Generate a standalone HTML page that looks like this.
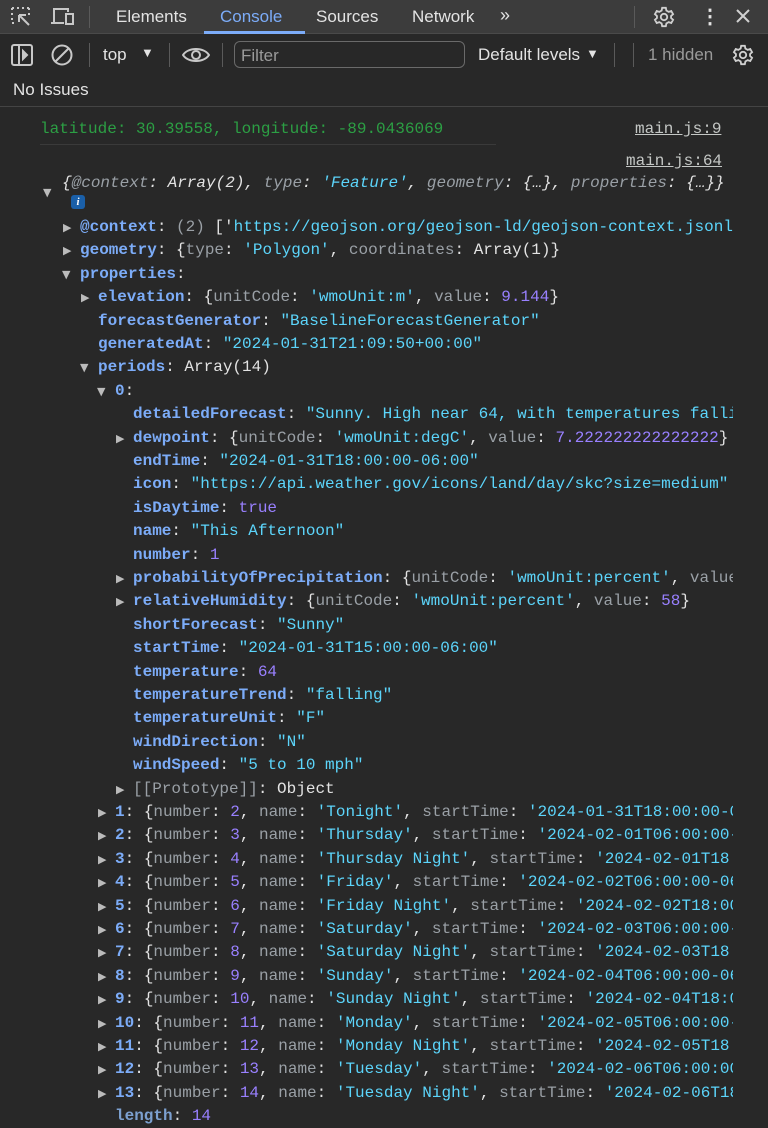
<!DOCTYPE html>
<html><head><meta charset="utf-8"><style>
*{margin:0;padding:0;box-sizing:border-box}
body{width:768px;height:1128px;background:#282828;overflow:hidden;position:relative;font-family:"Liberation Sans",sans-serif;color:#e3e3e3}
.tb{position:absolute;left:0;top:0;width:768px;height:34px;background:#3c3c3c;border-bottom:1px solid #4a4a4a}
.t{position:absolute;top:7px;font-size:17px;color:#e3e3e3}
.sel{color:#7cacf8}
.ul{position:absolute;left:204px;top:31px;width:101px;height:3px;background:#7cacf8}
.vs{position:absolute;width:1px;background:#5a5a5a}
.tool{position:absolute;top:35px;left:0;width:768px;height:40px}
.issues{position:absolute;left:13px;top:80px;font-size:17px}
.hr{position:absolute;left:0;width:768px;height:1px;background:#444}
.m{font-family:"Liberation Mono",monospace;font-size:16px;position:absolute;white-space:pre;line-height:23px}
.r{position:absolute;left:0;width:733px;overflow:hidden;height:23px}
.k{color:#7cacf8;font-weight:bold}
.kd{color:#7ca0d0;font-weight:bold}
.s{color:#5cd5fb}
.n{color:#9980ff}
.d{color:#9aa0a6}
.w{color:#e3e3e3}
.a{position:absolute;color:#bbb;font-size:11px;line-height:23px;font-family:"DejaVu Sans",sans-serif}
.r .a{top:0 !important}
.lnk{color:#c4c7c5;text-decoration:underline}
</style></head><body>
<div class="tb">
<svg style="position:absolute;left:10px;top:6px" width="24" height="22" viewBox="0 0 24 22" fill="none" stroke="#c8c8c8" stroke-width="2"><path d="M2 2h2M7 2h2M12 2h2M17 2h2M2 2v2M2 7v2M2 12v2M2 17h2M19 2v2M19 7v2" /><path d="M9 9l10 10M9 9v7M9 9h7"/></svg>
<svg style="position:absolute;left:50px;top:6px" width="26" height="22" viewBox="0 0 26 22" fill="none" stroke="#c8c8c8" stroke-width="2"><path d="M4 16V3h14v3M1 17h13"/><rect x="16" y="8" width="7" height="10"/></svg>
<div class="vs" style="left:89px;top:6px;height:22px"></div>
<div class="t" style="left:116px">Elements</div>
<div class="t sel" style="left:220px">Console</div>
<div class="t" style="left:316px">Sources</div>
<div class="t" style="left:412px">Network</div>
<div class="t" style="left:500px;font-size:18px;top:5px">»</div>
<div class="ul"></div>
<div class="vs" style="left:634px;top:6px;height:22px"></div>
<svg style="position:absolute;left:653px;top:6px" width="22" height="22" viewBox="0 0 24 24" fill="none" stroke="#d0d0d0" stroke-width="2"><circle cx="12" cy="12" r="3.5"/><path d="M10 2h4l.6 3 2.5 1.4 2.8-1 2 3.5-2.2 2v2.2l2.2 2-2 3.5-2.8-1L14.6 19 14 22h-4l-.6-3-2.5-1.4-2.8 1-2-3.5 2.2-2v-2.2l-2.2-2 2-3.5 2.8 1L9.4 5z"/></svg>
<div class="t" style="left:700px;top:4px;font-size:20px;font-weight:bold">⋮</div>
<svg style="position:absolute;left:735px;top:8px" width="16" height="16" viewBox="0 0 16 16" stroke="#d0d0d0" stroke-width="2"><path d="M2 2l12 12M14 2L2 14"/></svg>
</div>
<div class="tool">
<svg style="position:absolute;left:11px;top:9px" width="22" height="22" viewBox="0 0 22 22" fill="none" stroke="#c8c8c8" stroke-width="2"><rect x="1" y="1" width="20" height="20" rx="2"/><path d="M8 1v20"/><path d="M12 7l4 4-4 4z" fill="#c8c8c8"/></svg>
<svg style="position:absolute;left:51px;top:9px" width="22" height="22" viewBox="0 0 22 22" fill="none" stroke="#c8c8c8" stroke-width="2"><circle cx="11" cy="11" r="9.5"/><path d="M4 18L18 4"/></svg>
<div class="vs" style="left:89px;top:8px;height:24px"></div>
<div class="t" style="left:103px;top:10px">top</div>
<div class="t" style="left:141px;top:10px;font-size:13px">▼</div>
<div class="vs" style="left:169px;top:8px;height:24px"></div>
<svg style="position:absolute;left:182px;top:11px" width="28" height="18" viewBox="0 0 28 18" fill="none" stroke="#c8c8c8" stroke-width="2"><path d="M1 9C6 1 22 1 27 9 22 17 6 17 1 9z"/><circle cx="14" cy="9" r="4"/></svg>
<div class="vs" style="left:222px;top:8px;height:24px"></div>
<div style="position:absolute;left:234px;top:6px;width:231px;height:27px;border:1px solid #6a6a6a;border-radius:6px"></div>
<div class="t" style="left:241px;top:11px;color:#9a9a9a">Filter</div>
<div class="t" style="left:478px;top:10px">Default levels</div>
<div class="t" style="left:586px;top:11px;font-size:13px">▼</div>
<div class="vs" style="left:614px;top:8px;height:24px"></div>
<div class="vs" style="left:633px;top:8px;height:24px"></div>
<div class="t" style="left:648px;top:10px;color:#9a9a9a">1 hidden</div>
<svg style="position:absolute;left:732px;top:9px" width="22" height="22" viewBox="0 0 24 24" fill="none" stroke="#d0d0d0" stroke-width="2"><circle cx="12" cy="12" r="3.5"/><path d="M10 2h4l.6 3 2.5 1.4 2.8-1 2 3.5-2.2 2v2.2l2.2 2-2 3.5-2.8-1L14.6 19 14 22h-4l-.6-3-2.5-1.4-2.8 1-2-3.5 2.2-2v-2.2l-2.2-2 2-3.5 2.8 1L9.4 5z"/></svg>
</div>
<div class="issues">No Issues</div>
<div class="hr" style="top:106px"></div>
<div class="m" style="left:40px;top:118px;color:#2c9f44">latitude: 30.39558, longitude: -89.0436069</div>
<div class="m lnk" style="left:635px;top:118px">main.js:9</div>
<div class="hr" style="top:144px;left:40px;width:456px;background:#3a3a3a"></div>
<div class="m lnk" style="left:626px;top:150px">main.js:64</div>
<div class="a" style="left:43px;top:181px">▼</div>
<div class="m" style="left:62px;top:172px;font-style:italic"><span class="w">{</span><span class="d">@context</span><span class="w">: Array(2), </span><span class="d">type</span><span class="w">: </span><span class="s">'Feature'</span><span class="w">, </span><span class="d">geometry</span><span class="w">: {…}, </span><span class="d">properties</span><span class="w">: {…}}</span></div>
<div style="position:absolute;left:71px;top:195px;width:14px;height:14px;border-radius:3px;background:#1a5fa8;color:#fff;font:bold italic 11px 'Liberation Serif',serif;text-align:center;line-height:14px">i</div>
<div class="m" style="left:0;top:216px;width:733px;height:912px;overflow:hidden">
<div class="r" style="top:0"><span class="a" style="left:63px">▶</span><span style="position:absolute;left:80px"><span class="k">@context</span>: <span class="d">(2)</span> ['<span class="s">https://geojson.org/geojson-ld/geojson-context.jsonld</span></span></div>
<div class="r" style="top:23.4px"><span class="a" style="left:63px">▶</span><span style="position:absolute;left:80px"><span class="k">geometry</span>: {<span class="d">type</span>: <span class="s">'Polygon'</span>, <span class="d">coordinates</span>: Array(1)}</span></div>
<div class="r" style="top:46.8px"><span class="a" style="left:62px">▼</span><span style="position:absolute;left:80px"><span class="k">properties</span>:</span></div>
<div class="r" style="top:70.2px"><span class="a" style="left:81px">▶</span><span style="position:absolute;left:98px"><span class="k">elevation</span>: {<span class="d">unitCode</span>: <span class="s">'wmoUnit:m'</span>, <span class="d">value</span>: <span class="n">9.144</span>}</span></div>
<div class="r" style="top:93.6px"><span style="position:absolute;left:98px"><span class="k">forecastGenerator</span>: <span class="s">"BaselineForecastGenerator"</span></span></div>
<div class="r" style="top:117px"><span style="position:absolute;left:98px"><span class="k">generatedAt</span>: <span class="s">"2024-01-31T21:09:50+00:00"</span></span></div>
<div class="r" style="top:140.4px"><span class="a" style="left:80px">▼</span><span style="position:absolute;left:98px"><span class="k">periods</span>: Array(14)</span></div>
<div class="r" style="top:163.8px"><span class="a" style="left:97px">▼</span><span style="position:absolute;left:115px"><span class="k">0</span>:</span></div>
<div class="r" style="top:187.2px"><span style="position:absolute;left:133px"><span class="k">detailedForecast</span>: <span class="s">"Sunny. High near 64, with temperatures falling</span></span></div>
<div class="r" style="top:210.6px"><span class="a" style="left:116px">▶</span><span style="position:absolute;left:133px"><span class="k">dewpoint</span>: {<span class="d">unitCode</span>: <span class="s">'wmoUnit:degC'</span>, <span class="d">value</span>: <span class="n">7.222222222222222</span>}</span></div>
<div class="r" style="top:234px"><span style="position:absolute;left:133px"><span class="k">endTime</span>: <span class="s">"2024-01-31T18:00:00-06:00"</span></span></div>
<div class="r" style="top:257.4px"><span style="position:absolute;left:133px"><span class="k">icon</span>: <span class="s">"https://api.weather.gov/icons/land/day/skc?size=medium"</span></span></div>
<div class="r" style="top:280.8px"><span style="position:absolute;left:133px"><span class="k">isDaytime</span>: <span class="n">true</span></span></div>
<div class="r" style="top:304.2px"><span style="position:absolute;left:133px"><span class="k">name</span>: <span class="s">"This Afternoon"</span></span></div>
<div class="r" style="top:327.6px"><span style="position:absolute;left:133px"><span class="k">number</span>: <span class="n">1</span></span></div>
<div class="r" style="top:351px"><span class="a" style="left:116px">▶</span><span style="position:absolute;left:133px"><span class="k">probabilityOfPrecipitation</span>: {<span class="d">unitCode</span>: <span class="s">'wmoUnit:percent'</span>, <span class="d">value</span>: <span class="n">0</span>}</span></div>
<div class="r" style="top:374.4px"><span class="a" style="left:116px">▶</span><span style="position:absolute;left:133px"><span class="k">relativeHumidity</span>: {<span class="d">unitCode</span>: <span class="s">'wmoUnit:percent'</span>, <span class="d">value</span>: <span class="n">58</span>}</span></div>
<div class="r" style="top:397.8px"><span style="position:absolute;left:133px"><span class="k">shortForecast</span>: <span class="s">"Sunny"</span></span></div>
<div class="r" style="top:421.2px"><span style="position:absolute;left:133px"><span class="k">startTime</span>: <span class="s">"2024-01-31T15:00:00-06:00"</span></span></div>
<div class="r" style="top:444.6px"><span style="position:absolute;left:133px"><span class="k">temperature</span>: <span class="n">64</span></span></div>
<div class="r" style="top:468px"><span style="position:absolute;left:133px"><span class="k">temperatureTrend</span>: <span class="s">"falling"</span></span></div>
<div class="r" style="top:491.4px"><span style="position:absolute;left:133px"><span class="k">temperatureUnit</span>: <span class="s">"F"</span></span></div>
<div class="r" style="top:514.8px"><span style="position:absolute;left:133px"><span class="k">windDirection</span>: <span class="s">"N"</span></span></div>
<div class="r" style="top:538.2px"><span style="position:absolute;left:133px"><span class="k">windSpeed</span>: <span class="s">"5 to 10 mph"</span></span></div>
<div class="r" style="top:561.6px"><span class="a" style="left:116px">▶</span><span style="position:absolute;left:133px"><span style="color:#9aa0a6">[[Prototype]]</span>: Object</span></div>
<div class="r" style="top:585px"><span class="a" style="left:98px">▶</span><span style="position:absolute;left:115px"><span class="k">1</span>: {<span class="d">number</span>: <span class="n">2</span>, <span class="d">name</span>: <span class="s">'Tonight'</span>, <span class="d">startTime</span>: <span class="s">'2024-01-31T18:00:00-06:00'</span></span></div>
<div class="r" style="top:608.4px"><span class="a" style="left:98px">▶</span><span style="position:absolute;left:115px"><span class="k">2</span>: {<span class="d">number</span>: <span class="n">3</span>, <span class="d">name</span>: <span class="s">'Thursday'</span>, <span class="d">startTime</span>: <span class="s">'2024-02-01T06:00:00-06:00'</span></span></div>
<div class="r" style="top:631.8px"><span class="a" style="left:98px">▶</span><span style="position:absolute;left:115px"><span class="k">3</span>: {<span class="d">number</span>: <span class="n">4</span>, <span class="d">name</span>: <span class="s">'Thursday Night'</span>, <span class="d">startTime</span>: <span class="s">'2024-02-01T18:00:00'</span></span></div>
<div class="r" style="top:655.2px"><span class="a" style="left:98px">▶</span><span style="position:absolute;left:115px"><span class="k">4</span>: {<span class="d">number</span>: <span class="n">5</span>, <span class="d">name</span>: <span class="s">'Friday'</span>, <span class="d">startTime</span>: <span class="s">'2024-02-02T06:00:00-06:00'</span></span></div>
<div class="r" style="top:678.6px"><span class="a" style="left:98px">▶</span><span style="position:absolute;left:115px"><span class="k">5</span>: {<span class="d">number</span>: <span class="n">6</span>, <span class="d">name</span>: <span class="s">'Friday Night'</span>, <span class="d">startTime</span>: <span class="s">'2024-02-02T18:00:00'</span></span></div>
<div class="r" style="top:702px"><span class="a" style="left:98px">▶</span><span style="position:absolute;left:115px"><span class="k">6</span>: {<span class="d">number</span>: <span class="n">7</span>, <span class="d">name</span>: <span class="s">'Saturday'</span>, <span class="d">startTime</span>: <span class="s">'2024-02-03T06:00:00-06:00'</span></span></div>
<div class="r" style="top:725.4px"><span class="a" style="left:98px">▶</span><span style="position:absolute;left:115px"><span class="k">7</span>: {<span class="d">number</span>: <span class="n">8</span>, <span class="d">name</span>: <span class="s">'Saturday Night'</span>, <span class="d">startTime</span>: <span class="s">'2024-02-03T18:00:00'</span></span></div>
<div class="r" style="top:748.8px"><span class="a" style="left:98px">▶</span><span style="position:absolute;left:115px"><span class="k">8</span>: {<span class="d">number</span>: <span class="n">9</span>, <span class="d">name</span>: <span class="s">'Sunday'</span>, <span class="d">startTime</span>: <span class="s">'2024-02-04T06:00:00-06:00'</span></span></div>
<div class="r" style="top:772.2px"><span class="a" style="left:98px">▶</span><span style="position:absolute;left:115px"><span class="k">9</span>: {<span class="d">number</span>: <span class="n">10</span>, <span class="d">name</span>: <span class="s">'Sunday Night'</span>, <span class="d">startTime</span>: <span class="s">'2024-02-04T18:00:00'</span></span></div>
<div class="r" style="top:795.6px"><span class="a" style="left:98px">▶</span><span style="position:absolute;left:115px"><span class="k">10</span>: {<span class="d">number</span>: <span class="n">11</span>, <span class="d">name</span>: <span class="s">'Monday'</span>, <span class="d">startTime</span>: <span class="s">'2024-02-05T06:00:00-06:00'</span></span></div>
<div class="r" style="top:819px"><span class="a" style="left:98px">▶</span><span style="position:absolute;left:115px"><span class="k">11</span>: {<span class="d">number</span>: <span class="n">12</span>, <span class="d">name</span>: <span class="s">'Monday Night'</span>, <span class="d">startTime</span>: <span class="s">'2024-02-05T18:00:00'</span></span></div>
<div class="r" style="top:842.4px"><span class="a" style="left:98px">▶</span><span style="position:absolute;left:115px"><span class="k">12</span>: {<span class="d">number</span>: <span class="n">13</span>, <span class="d">name</span>: <span class="s">'Tuesday'</span>, <span class="d">startTime</span>: <span class="s">'2024-02-06T06:00:00-06:00'</span></span></div>
<div class="r" style="top:865.8px"><span class="a" style="left:98px">▶</span><span style="position:absolute;left:115px"><span class="k">13</span>: {<span class="d">number</span>: <span class="n">14</span>, <span class="d">name</span>: <span class="s">'Tuesday Night'</span>, <span class="d">startTime</span>: <span class="s">'2024-02-06T18:00:00'</span></span></div>
<div class="r" style="top:889.2px"><span style="position:absolute;left:115px"><span class="kd">length</span>: <span class="n">14</span></span></div>
</div>
</body></html>
